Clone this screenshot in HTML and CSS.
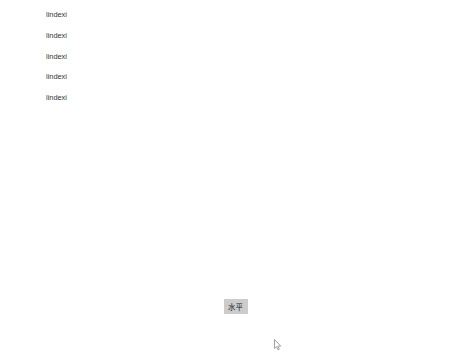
FILE: index.html
```html
<!DOCTYPE html>
<html>
<head>
<meta charset="utf-8">
<link rel="stylesheet" href="styles.css">
</head>
<body>
<div class="window">
  <ul class="list">
    <li class="item">lindexi</li>
    <li class="item">lindexi</li>
    <li class="item">lindexi</li>
    <li class="item">lindexi</li>
    <li class="item">lindexi</li>
  </ul>
  <div class="footer">
    <button class="btn">水平</button>
  </div>
  <svg class="cursor" width="8" height="12" viewBox="0 0 8 12">
    <path d="M0.5 0.5 L0.5 9.5 L2.6 7.6 L4 10.8 L5.3 10.2 L3.9 7.1 L6.8 7.1 Z" fill="#fff" stroke="#8a8a8a" stroke-width="0.8" stroke-linejoin="round"/>
  </svg>
</div>
</body>
</html>
```
FILE: styles.css
```css
html, body {
  margin: 0;
  padding: 0;
  background: #fff;
}
.window {
  position: relative;
  width: 474px;
  height: 358px;
  display: flex;
  flex-direction: column;
  font-family: "Liberation Sans", "Noto Sans CJK SC", sans-serif;
  font-size: 7.4px;
  color: #333;
}
.list {
  list-style: none;
  margin: 0;
  padding: 5px 0 0 46px;
}
.item {
  height: 20.8px;
  line-height: 20.8px;
}
.footer {
  flex: 1;
  display: flex;
  justify-content: center;
  align-items: flex-end;
  padding-bottom: 44px;
  padding-right: 3px;
}
.btn {
  width: 24px;
  height: 15px;
  padding: 0;
  border: none;
  border-radius: 0;
  background: #cccccc;
  color: #222;
  font-family: "Noto Sans CJK SC", sans-serif;
  font-weight: normal;
  font-size: 7.5px;
  line-height: 15px;
}
.cursor {
  position: absolute;
  left: 274px;
  top: 339px;
}
```
